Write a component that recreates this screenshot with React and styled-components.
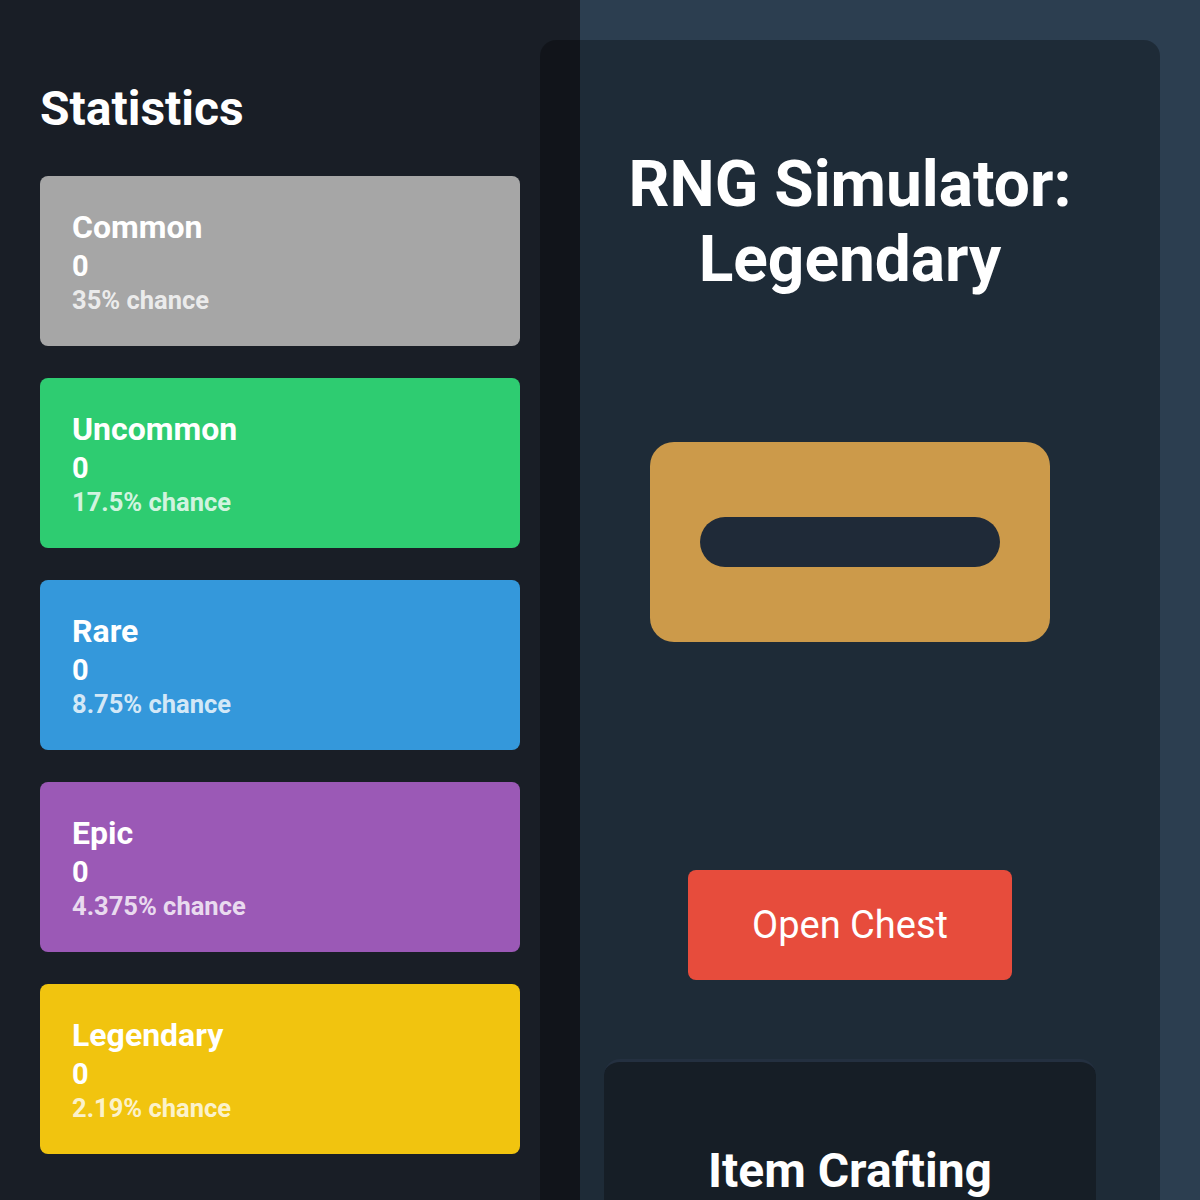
import React from 'react'
import styled, { createGlobalStyle } from 'styled-components'

const GlobalStyle = createGlobalStyle`
  html, body {
    margin: 0;
    padding: 0;
    background: #2c3e50;
    font-family: Roboto, "Liberation Sans", Arial, sans-serif;
    color: #ffffff;
  }
  * {
    box-sizing: border-box;
  }
`

const Layout = styled.div`
  display: flex;
  align-items: flex-start;
  min-height: 100vh;
  height: 1200px;
  overflow: hidden;
`

const Sidebar = styled.aside`
  flex: 0 0 580px;
  align-self: stretch;
  background: #191e26;
  padding: 40px 60px 40px 40px;
  display: flex;
  flex-direction: column;
`

const SidebarTitle = styled.h2`
  margin: 40px 0 39px;
  font-size: 48px;
  font-weight: 700;
  line-height: normal;
`

const StatList = styled.div`
  display: flex;
  flex-direction: column;
  gap: 32px;
`

const StatCard = styled.div`
  flex-shrink: 0;
  height: 170px;
  padding: 32px;
  border-radius: 8px;
  background: ${p => p.color};
  display: flex;
  flex-direction: column;
`

const StatName = styled.div`
  font-size: 32px;
  font-weight: 700;
  line-height: normal;
`

const StatCount = styled.div`
  margin-top: 3px;
  font-size: 29px;
  font-weight: 700;
  line-height: normal;
`

const StatChance = styled.div`
  margin-top: 2px;
  font-size: 25.5px;
  font-weight: 700;
  line-height: normal;
  color: rgba(255, 255, 255, 0.8);
`

const Main = styled.main`
  position: relative;
  z-index: 1;
  flex: 1;
  margin: 40px 40px 0 -40px;
  height: 1200px;
  border-radius: 16px 16px 0 0;
  background: rgba(0, 0, 0, 0.3);
  padding: 40px;
  display: flex;
  flex-direction: column;
  align-items: center;

  & > * {
    flex-shrink: 0;
  }
`

const Title = styled.h1`
  margin: 67px 0 0;
  font-size: 64px;
  font-weight: 700;
  line-height: 75px;
  text-align: center;
`

const Chest = styled.div`
  margin-top: 145px;
  width: 400px;
  height: 200px;
  border-radius: 24px;
  background: #cc9a4a;
  display: flex;
  align-items: center;
  justify-content: center;
`

const ChestSlot = styled.div`
  width: 300px;
  height: 50px;
  border-radius: 25px;
  background: #1f2a38;
`

const OpenButton = styled.button`
  margin-top: 228px;
  width: 324px;
  height: 110px;
  border: none;
  border-radius: 8px;
  background: #e74c3c;
  color: #ffffff;
  font-family: inherit;
  font-size: 38px;
  font-weight: 400;
  cursor: pointer;
`

const CraftingCard = styled.section`
  margin-top: 79px;
  width: 492px;
  height: 300px;
  border-radius: 16px;
  border-top: 3px solid #243040;
  background: #161e26;
  padding: 80px 40px 40px;
  text-align: center;
`

const CraftingTitle = styled.h2`
  margin: 0;
  font-size: 48px;
  font-weight: 700;
  line-height: normal;
`

const rarities = [
  { name: 'Common', chance: '35%', color: '#a6a6a6' },
  { name: 'Uncommon', chance: '17.5%', color: '#2ecc71' },
  { name: 'Rare', chance: '8.75%', color: '#3498db' },
  { name: 'Epic', chance: '4.375%', color: '#9b59b6' },
  { name: 'Legendary', chance: '2.19%', color: '#f1c40f' }
]

const App = () => {
  return (
    <>
      <GlobalStyle />
      <Layout>
        <Sidebar>
          <SidebarTitle>Statistics</SidebarTitle>
          <StatList>
            {rarities.map(r => (
              <StatCard key={r.name} color={r.color}>
                <StatName>{r.name}</StatName>
                <StatCount>0</StatCount>
                <StatChance>{r.chance} chance</StatChance>
              </StatCard>
            ))}
          </StatList>
        </Sidebar>
        <Main>
          <Title>
            RNG Simulator:
            <br />
            Legendary
          </Title>
          <Chest>
            <ChestSlot />
          </Chest>
          <OpenButton>Open Chest</OpenButton>
          <CraftingCard>
            <CraftingTitle>Item Crafting</CraftingTitle>
          </CraftingCard>
        </Main>
      </Layout>
    </>
  )
}

export default App
